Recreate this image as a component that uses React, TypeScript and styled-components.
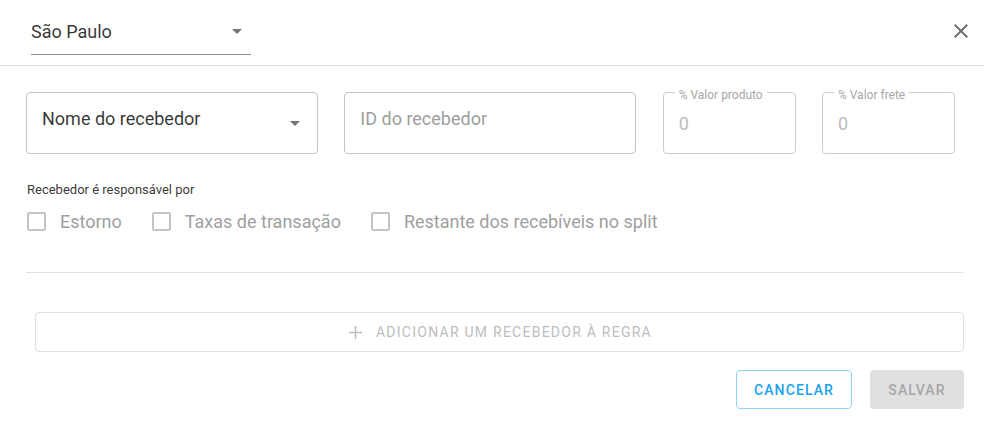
import React from "react";
import styled, { createGlobalStyle } from "styled-components";

const Global = createGlobalStyle`
  html, body { margin: 0; padding: 0; background: #fff; }
  body { font-family: Roboto, "Noto Sans", Arial, sans-serif; color: rgba(0,0,0,0.87); }
  * { box-sizing: border-box; }
`;

const Page = styled.div`
  width: 984px;
  height: 434px;
  background: #fff;
  display: flex;
  flex-direction: column;
`;

const Header = styled.div`
  height: 66px;
  border-bottom: 1px solid #e0e0e0;
  display: flex;
  align-items: flex-start;
  justify-content: space-between;
  padding: 0 11px 0 31px;
`;

const UnderlineSelect = styled.div`
  margin-top: 16px;
  width: 220px;
  height: 39px;
  border-bottom: 1px solid #8c8c8c;
  display: flex;
  align-items: center;
  justify-content: space-between;
  padding: 0 9px 7px 0;
  font-size: 18px;
  color: rgba(0, 0, 0, 0.8);
`;

const Caret = styled.span`
  width: 0;
  height: 0;
  border-left: 5px solid transparent;
  border-right: 5px solid transparent;
  border-top: 5px solid #757575;
`;

const CloseButton = styled.button`
  margin-top: 19px;
  width: 24px;
  height: 24px;
  padding: 0;
  border: 0;
  background: none;
  display: flex;
  svg { display: block; }
`;

const Body = styled.div`
  padding: 26px 20px 0 26px;
  display: flex;
  flex-direction: column;
`;

const FieldsRow = styled.div`
  display: grid;
  grid-template-columns: 292px 292px 133px 133px;
  justify-content: space-between;
  width: 929px;
`;

const Box = styled.div<{ $tone?: "text" | "placeholder" | "value" }>`
  position: relative;
  height: 62px;
  border: 1px solid ${(p) => (p.$tone === "value" ? "#cccccc" : "#c4c4c4")};
  border-radius: 4px;
  display: flex;
  align-items: center;
  justify-content: space-between;
  padding: 0 17px 0 15px;
  font-size: 18px;
  color: ${(p) =>
    p.$tone === "placeholder" ? "#9e9e9e" : p.$tone === "value" ? "#bdbdbd" : "rgba(0,0,0,0.8)"};
`;

const BoxText = styled.span<{ $lift: number }>`
  margin-bottom: ${(p) => p.$lift}px;
`;

const FloatingLabel = styled.span`
  position: absolute;
  top: -5px;
  left: 11px;
  padding: 0 4px;
  background: #fff;
  font-size: 12px;
  line-height: 14px;
  color: #a8a8a8;
`;

const GroupLabel = styled.div`
  margin-top: 28px;
  font-size: 13px;
  line-height: 15px;
  color: rgba(0, 0, 0, 0.8);
  padding-left: 1px;
`;

const CheckRow = styled.div`
  margin-top: 12px;
  height: 24px;
  display: flex;
  align-items: center;
  gap: 30px;
  padding-left: 1px;
`;

const CheckItem = styled.label`
  display: flex;
  align-items: center;
  gap: 14px;
  font-size: 18px;
  color: #a0a0a0;
`;

const Square = styled.span`
  width: 19px;
  height: 19px;
  border: 2px solid #c4c4c4;
  border-radius: 2px;
`;

const Divider = styled.hr`
  margin: 39px 1px 0 0;
  border: 0;
  border-top: 1px solid #e0e0e0;
  height: 0;
`;

const AddButton = styled.button`
  margin: 39px 0 0 9px;
  height: 40px;
  border: 1px solid #e0e0e0;
  border-radius: 4px;
  background: #fff;
  display: flex;
  align-items: center;
  justify-content: center;
  gap: 14px;
  font-family: Roboto, sans-serif;
  font-size: 14px;
  letter-spacing: 1.25px;
  color: #bdbdbd;
  text-transform: uppercase;
  padding: 0 0 0 2px;
  svg { display: block; }
`;

const Actions = styled.div`
  margin-top: 18px;
  display: flex;
  justify-content: flex-end;
  gap: 18px;
`;

const ActionButton = styled.button<{ $variant: "outline" | "disabled" }>`
  height: 39px;
  border-radius: 4px;
  font-family: Roboto, sans-serif;
  font-size: 14px;
  font-weight: 500;
  letter-spacing: 1.1px;
  text-transform: uppercase;
  padding: 0;
  width: ${(p) => (p.$variant === "outline" ? "116px" : "94px")};
  border: ${(p) => (p.$variant === "outline" ? "1px solid #8fd3fb" : "0")};
  color: ${(p) => (p.$variant === "outline" ? "#1aa3ef" : "#a6a6a6")};
  background: ${(p) => (p.$variant === "outline" ? "#fff" : "#e0e0e0")};
`;

export default function App() {
  return (
    <Page>
      <Global />
      <Header>
        <UnderlineSelect>
          <span>São Paulo</span>
          <Caret />
        </UnderlineSelect>
        <CloseButton aria-label="Fechar">
          <svg width="24" height="24" viewBox="0 0 24 24">
            <path
              fill="#6f6f6f"
              d="M19 6.41 17.59 5 12 10.59 6.41 5 5 6.41 10.59 12 5 17.59 6.41 19 12 13.41 17.59 19 19 17.59 13.41 12z"
            />
          </svg>
        </CloseButton>
      </Header>
      <Body>
        <FieldsRow>
          <Box $tone="text">
            <BoxText $lift={10}>Nome do recebedor</BoxText>
            <Caret />
          </Box>
          <Box $tone="placeholder">
            <BoxText $lift={10}>ID do recebedor</BoxText>
          </Box>
          <Box $tone="value">
            <FloatingLabel>% Valor produto</FloatingLabel>
            <BoxText $lift={0}>0</BoxText>
          </Box>
          <Box $tone="value">
            <FloatingLabel>% Valor frete</FloatingLabel>
            <BoxText $lift={0}>0</BoxText>
          </Box>
        </FieldsRow>
        <GroupLabel>Recebedor é responsável por</GroupLabel>
        <CheckRow>
          <CheckItem>
            <Square />
            Estorno
          </CheckItem>
          <CheckItem>
            <Square />
            Taxas de transação
          </CheckItem>
          <CheckItem>
            <Square />
            Restante dos recebíveis no split
          </CheckItem>
        </CheckRow>
        <Divider />
        <AddButton>
          <svg width="13" height="13" viewBox="0 0 13 13">
            <path d="M6.5 0v13M0 6.5h13" stroke="#bdbdbd" strokeWidth="1.6" />
          </svg>
          Adicionar um recebedor à regra
        </AddButton>
        <Actions>
          <ActionButton $variant="outline">Cancelar</ActionButton>
          <ActionButton $variant="disabled">Salvar</ActionButton>
        </Actions>
      </Body>
    </Page>
  );
}
